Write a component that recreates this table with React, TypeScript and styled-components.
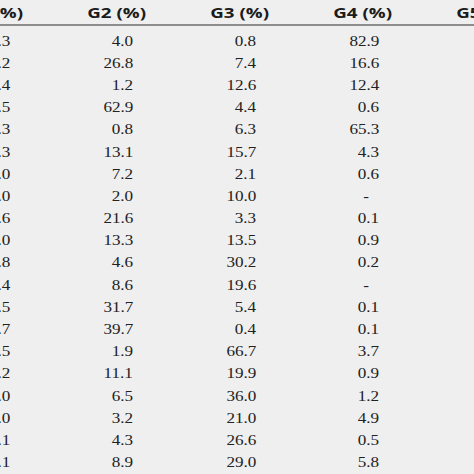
import React from "react";
import styled, { createGlobalStyle } from "styled-components";

const GlobalStyle = createGlobalStyle`
  html, body {
    margin: 0;
    padding: 0;
    background: #efefef;
    overflow: hidden;
  }
`;

const COLS = "24px repeat(4, 123px)";

const Page = styled.div`
  width: 474px;
  height: 474px;
  overflow: hidden;
  background: #efefef;
`;

const HeaderRow = styled.div`
  display: grid;
  grid-template-columns: ${COLS};
  width: max-content;
  border-bottom: 2px solid #8d8d8d;
`;

const HeaderCell = styled.div`
  height: 23px;
  padding-bottom: 1px;
  display: flex;
  justify-content: flex-end;
  align-items: center;
  padding-right: 1px;
  white-space: nowrap;
  font-family: "Open Sans", "Liberation Sans", sans-serif;
  font-weight: 700;
  font-size: 15px;
  color: #1b1b1b;
`;

const HeaderText = styled.span`
  display: inline-block;
  transform: scaleX(1.25);
  transform-origin: right center;
`;

const Body = styled.div`
  display: grid;
  grid-template-columns: ${COLS};
  width: max-content;
  padding-top: 4px;
`;

const DataCell = styled.div<{ $dash?: boolean }>`
  height: 22.2px;
  display: flex;
  justify-content: flex-end;
  align-items: center;
  padding-right: ${(p) => (p.$dash ? "24px" : "14px")};
  white-space: nowrap;
  font-family: "Liberation Serif", "Times New Roman", serif;
  font-size: 14.5px;
  color: #222;
`;

const DataText = styled.span`
  display: inline-block;
  transform: scaleX(1.18);
  transform-origin: right center;
`;

const headers = ["G1 (%)", "G2 (%)", "G3 (%)", "G4 (%)", "G5 (%)"];

const g1 = ["10.3", "45.2", "73.4", "31.5", "27.3", "66.3", "88.0", "86.0", "72.6", "72.0", "62.8", "71.4", "62.5", "59.7", "27.5", "67.2", "55.0", "70.0", "68.1", "56.1"];
const g2 = ["4.0", "26.8", "1.2", "62.9", "0.8", "13.1", "7.2", "2.0", "21.6", "13.3", "4.6", "8.6", "31.7", "39.7", "1.9", "11.1", "6.5", "3.2", "4.3", "8.9"];
const g3 = ["0.8", "7.4", "12.6", "4.4", "6.3", "15.7", "2.1", "10.0", "3.3", "13.5", "30.2", "19.6", "5.4", "0.4", "66.7", "19.9", "36.0", "21.0", "26.6", "29.0"];
const g4 = ["82.9", "16.6", "12.4", "0.6", "65.3", "4.3", "0.6", "-", "0.1", "0.9", "0.2", "-", "0.1", "0.1", "3.7", "0.9", "1.2", "4.9", "0.5", "5.8"];

const rows = g2.map((_, i) => [g1[i], g2[i], g3[i], g4[i], ""]);

export default function App() {
  return (
    <Page>
      <GlobalStyle />
      <HeaderRow>
        {headers.map((h) => (
          <HeaderCell key={h}>
            <HeaderText>{h}</HeaderText>
          </HeaderCell>
        ))}
      </HeaderRow>
      <Body>
        {rows.map((r, i) =>
          r.map((v, j) => (
            <DataCell key={`${i}-${j}`} $dash={v === "-"}>
              <DataText>{v}</DataText>
            </DataCell>
          ))
        )}
      </Body>
    </Page>
  );
}
